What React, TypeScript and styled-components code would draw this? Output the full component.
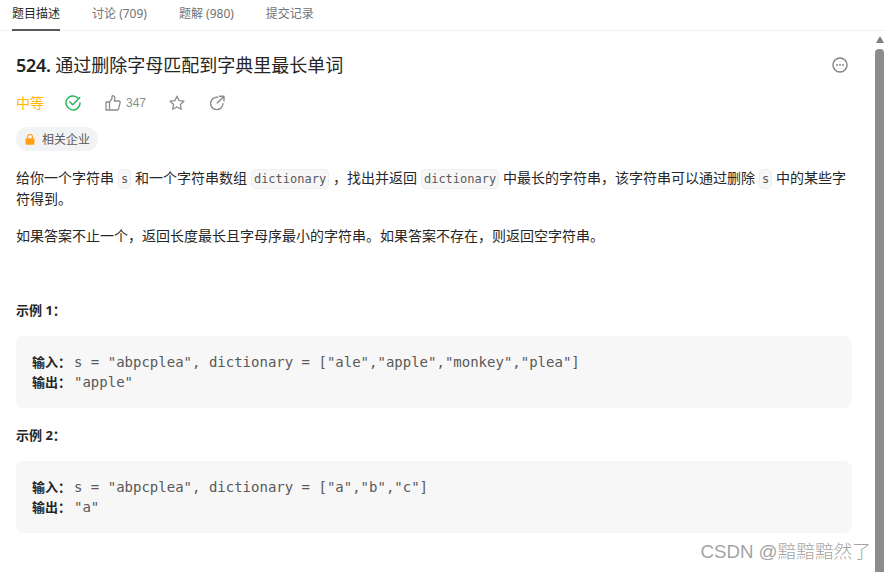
import styled, { createGlobalStyle } from "styled-components";

const GlobalStyle = createGlobalStyle`
  html, body {
    margin: 0;
    padding: 0;
    height: 100%;
    overflow: hidden;
    background: #fff;
  }
  body {
    font-family: "Noto Sans", "Noto Sans CJK SC", sans-serif;
    color: #262626;
  }
`;

function App() {
  return (
    <>
      <GlobalStyle />
      <Page>
        <TabBar>
          <Tab $active>题目描述</Tab>
          <Tab>讨论 (709)</Tab>
          <Tab>题解 (980)</Tab>
          <Tab>提交记录</Tab>
        </TabBar>
        <Body>
          <Content>
            <TitleRow>
              <Title>
                <b>524.</b> 通过删除字母匹配到字典里最长单词
              </Title>
              <svg width="16" height="16" viewBox="0 0 16 16" fill="none">
                <circle cx="8" cy="8" r="7" stroke="#808080" strokeWidth="1.4" />
                <circle cx="5" cy="8" r="0.9" fill="#808080" />
                <circle cx="8" cy="8" r="0.9" fill="#808080" />
                <circle cx="11" cy="8" r="0.9" fill="#808080" />
              </svg>
            </TitleRow>
            <MetaRow>
              <Difficulty>中等</Difficulty>
              <CheckSlot>
                <svg width="16" height="16" viewBox="0 0 16 16" fill="none">
                  <path
                    d="M13.2 3.2A7 7 0 1 0 15 8"
                    stroke="#2db55d"
                    strokeWidth="1.5"
                    strokeLinecap="round"
                  />
                  <path
                    d="M4.8 6.800l3 3 7-7.300"
                    stroke="#2db55d"
                    strokeWidth="1.5"
                    strokeLinecap="round"
                    strokeLinejoin="round"
                  />
                </svg>
              </CheckSlot>
              <LikeSlot>
                <svg width="16" height="16" viewBox="0 0 16 16" fill="none">
                  <path
                    d="M1 7h3.500v8H1zM4.500 7L7 3.500V1.800C7 .9 7.700.6 8.300.8c1.200.4 1.700 1.500 1.500 2.700L9.400 6H14c.8 0 1.300.7 1.100 1.500l-1.500 6.300c-.2.700-.7 1.200-1.500 1.200H4.500"
                    stroke="#8c8c8c"
                    strokeWidth="1.300"
                    strokeLinejoin="round"
                  />
                </svg>
                <LikeCount>347</LikeCount>
              </LikeSlot>
              <StarSlot>
                <svg width="16" height="16" viewBox="0 0 16 16" fill="none">
                  <path
                    d="M8 1.200l2.100 4.400 4.800.6-3.500 3.300.9 4.800L8 12l-4.300 2.300.9-4.800L1.100 6.200l4.800-.6z"
                    stroke="#8c8c8c"
                    strokeWidth="1.300"
                    strokeLinejoin="round"
                  />
                </svg>
              </StarSlot>
              <ShareSlot>
                <svg width="15" height="16" viewBox="0 0 15 16" fill="none">
                  <path
                    d="M7.500 2.300A6.200 6.200 0 1 0 13 8.800M9.300 1.200h4.700v4.700M13.800 1.400L7.300 8"
                    stroke="#8c8c8c"
                    strokeWidth="1.400"
                    strokeLinecap="round"
                    strokeLinejoin="round"
                  />
                </svg>
              </ShareSlot>
            </MetaRow>
            <CompanyTag>
              <svg width="10" height="11" viewBox="0 0 10 11">
                <path
                  d="M2.500 4.500V3a2.500 2.500 0 0 1 5 0v1.500"
                  fill="none"
                  stroke="#ffa116"
                  strokeWidth="1.200"
                />
                <rect x="0.500" y="4.200" width="9" height="6.500" rx="1" fill="#ffa116" />
              </svg>
              相关企业
            </CompanyTag>
            <Paragraph>
              给你一个字符串 <Code>s</Code> 和一个字符串数组 <Code>dictionary</Code> ，找出并返回{" "}
              <Code>dictionary</Code> 中最长的字符串，该字符串可以通过删除 <Code>s</Code> 中的某些字符得到。
            </Paragraph>
            <Paragraph>
              如果答案不止一个，返回长度最长且字母序最小的字符串。如果答案不存在，则返回空字符串。
            </Paragraph>
            <ExampleHeading $first>示例 1：</ExampleHeading>
            <ExampleBlock>
              <strong>输入：</strong>s = "abpcplea", dictionary = ["ale","apple","monkey","plea"]
              {"\n"}
              <strong>输出：</strong>"apple"
            </ExampleBlock>
            <ExampleHeading>示例 2：</ExampleHeading>
            <ExampleBlock>
              <strong>输入：</strong>s = "abpcplea", dictionary = ["a","b","c"]
              {"\n"}
              <strong>输出：</strong>"a"
            </ExampleBlock>
          </Content>
          <Scrollbar>
            <ScrollArrow />
            <ScrollThumb />
          </Scrollbar>
        </Body>
        <Watermark>CSDN @黯黯黯然了</Watermark>
      </Page>
    </>
  );
}

export default App;

const Page = styled.div`
  position: relative;
  display: flex;
  flex-direction: column;
  width: 884px;
  height: 572px;
  overflow: hidden;
`;

const TabBar = styled.div`
  display: flex;
  flex: none;
  gap: 32px;
  height: 30px;
  padding-left: 12px;
  border-bottom: 1px solid #f0f0f0;
`;

const Tab = styled.div<{ $active?: boolean }>`
  height: 31px;
  box-sizing: border-box;
  padding-top: 5px;
  font-size: 12px;
  line-height: 18px;
  color: ${(p) => (p.$active ? "#262626" : "#737373")};
  border-bottom: 2px solid ${(p) => (p.$active ? "#595959" : "transparent")};
`;

const Body = styled.div`
  display: flex;
  flex: 1;
  min-height: 0;
`;

const Content = styled.div`
  flex: none;
  box-sizing: border-box;
  width: 868px;
  padding: 0 16px;
`;

const TitleRow = styled.div`
  display: flex;
  align-items: center;
  justify-content: space-between;
  height: 24px;
  margin-top: 22px;
  padding-right: 4px;
`;

const Title = styled.div`
  font-size: 18px;
  line-height: 24px;
  color: #262626;

  b {
    font-weight: 600;
    letter-spacing: -0.3px;
  }
`;

const MetaRow = styled.div`
  display: flex;
  align-items: center;
  height: 20px;
  margin-top: 16px;
`;

const Difficulty = styled.span`
  width: 49px;
  font-size: 14px;
  line-height: 20px;
  color: #ffb800;
`;

const CheckSlot = styled.span`
  display: flex;
  width: 40px;
`;

const LikeSlot = styled.span`
  display: flex;
  align-items: center;
  gap: 5px;
  width: 64px;
`;

const LikeCount = styled.span`
  font-family: "Liberation Sans", sans-serif;
  font-size: 12px;
  color: #8c8c8c;
`;

const StarSlot = styled.span`
  display: flex;
  width: 41px;
`;

const ShareSlot = styled.span`
  display: flex;
`;

const CompanyTag = styled.div`
  display: inline-flex;
  align-items: center;
  gap: 7px;
  height: 24px;
  margin-top: 14px;
  padding: 0 8px 0 9px;
  border-radius: 12px;
  background: #f2f3f5;
  font-size: 12px;
  color: #595959;
`;

const Paragraph = styled.p`
  margin: 16px 0 0;
  font-size: 14px;
  line-height: 21px;
  word-spacing: 0.25px;
  color: #262626;
`;

const Code = styled.code`
  padding: 2px;
  border: 1px solid #eee;
  border-radius: 5px;
  background: #f7f7f7;
  font-family: "DejaVu Sans Mono", monospace;
  font-size: 12px;
  line-height: 14px;
  color: #595959;
`;

const ExampleHeading = styled.div<{ $first?: boolean }>`
  margin-top: ${(p) => (p.$first ? "54px" : "17px")};
  font-size: 13px;
  font-weight: 700;
  line-height: 20px;
`;

const ExampleBlock = styled.pre`
  box-sizing: border-box;
  height: 72px;
  margin: 16px 0 0;
  padding: 16px;
  border-radius: 8px;
  background: #f7f7f7;
  font-family: "DejaVu Sans Mono", monospace;
  font-size: 14px;
  line-height: 20px;
  color: #595959;

  strong {
    margin-right: 3px;
    font-family: "Noto Sans", "Noto Sans CJK SC", sans-serif;
    font-size: 13px;
    color: #262626;
  }
`;

const Scrollbar = styled.div`
  display: flex;
  flex-direction: column;
  flex: none;
  align-items: center;
  width: 16px;
  padding: 5px 0 0 7px;
  box-sizing: border-box;
`;

const ScrollArrow = styled.div`
  width: 0;
  height: 0;
  border-left: 4px solid transparent;
  border-right: 4px solid transparent;
  border-bottom: 7px solid #808080;
`;

const ScrollThumb = styled.div`
  flex: 1;
  width: 9px;
  margin-top: 6px;
  border-radius: 4px 4px 0 0;
  background: #8c8c8c;
`;

const Watermark = styled.div`
  position: absolute;
  right: 13px;
  bottom: 8px;
  font-family: "Liberation Sans", "Noto Sans CJK SC", sans-serif;
  font-size: 18.7px;
  font-weight: 300;
  line-height: 24px;
  color: rgba(110, 110, 110, 0.65);
`;
